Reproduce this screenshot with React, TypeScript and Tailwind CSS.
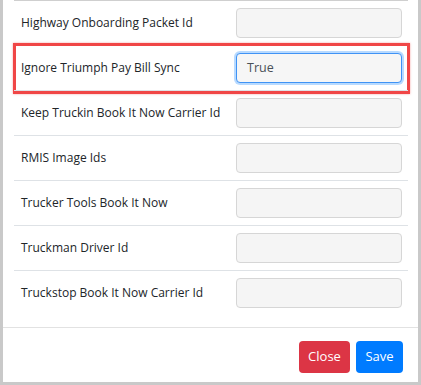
import React from "react";

const rows = [
  { label: "Highway Onboarding Packet Id", value: "" },
  { label: "Ignore Triumph Pay Bill Sync", value: "True", focus: true },
  { label: "Keep Truckin Book It Now Carrier Id", value: "" },
  { label: "RMIS Image Ids", value: "" },
  { label: "Trucker Tools Book It Now", value: "" },
  { label: "Truckman Driver Id", value: "" },
  { label: "Truckstop Book It Now Carrier Id", value: "" },
];

export default function App() {
  return (
    <div
      className="w-[421px] h-[385px] bg-[#c9c9c9] px-[3px] pb-[3px] overflow-hidden"
      style={{ fontFamily: '"Open Sans", "Noto Sans", sans-serif' }}
    >
      <div className="bg-white h-full flex flex-col">
        <div className="pl-[11px] pr-[10px] pb-[12px]">
          {rows.map((r, i) => (
            <div
              key={i}
              className={`relative flex items-center h-[45px] border-t ${i === 0 ? "border-[#cfcfcf]" : "border-[#dee2e6]"}`}
            >
              <div className="w-[222px] pl-[7px] text-[12px] text-[#212529] leading-none whitespace-nowrap">{r.label}</div>
              <div
                className={
                  r.focus
                    ? "w-[166px] h-[30px] rounded-[4px] border border-[#3f93f5] bg-[#f6f6f6] shadow-[0_0_0_2px_rgba(0,123,255,0.28)] flex items-center pl-[10px] text-[12.5px] text-[#495057]"
                    : "w-[166px] h-[30px] rounded-[4px] border border-[#d6d6d6] bg-[#f5f5f5]"
                }
              >
                {r.value}
              </div>
              {r.focus && (
                <div className="absolute left-[-1px] top-[-3px] w-[397px] h-[51px] border-[3px] border-[#f04646] shadow-[0_0_2px_rgba(240,70,70,0.5)] pointer-events-none" />
              )}
            </div>
          ))}
        </div>
        <div className="border-t border-[#e2e2e2] flex justify-end gap-[6px] pt-[13px] pr-[15px]">
          <button className="w-[51px] h-[32px] rounded-[4px] bg-[#dc3545] text-white text-[13px]">Close</button>
          <button className="w-[47px] h-[32px] rounded-[4px] bg-[#007bff] text-white text-[13px]">Save</button>
        </div>
      </div>
    </div>
  );
}
